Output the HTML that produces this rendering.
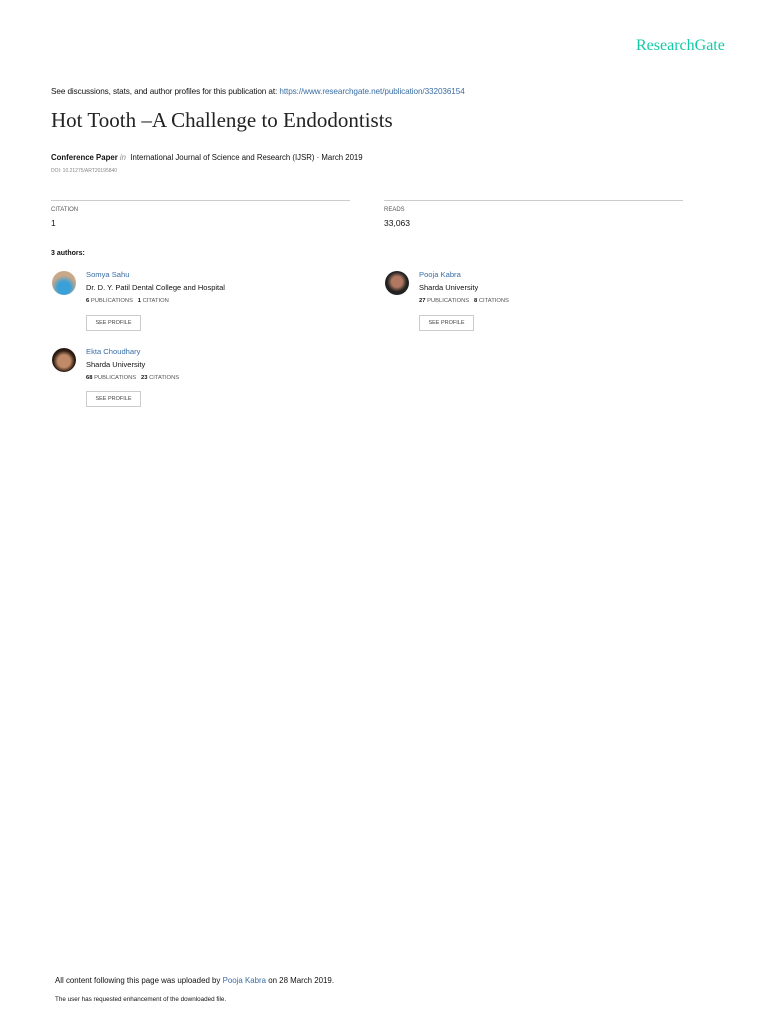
<!DOCTYPE html>
<html><head><meta charset="utf-8"><style>
body{margin:0;width:768px;height:1024px;background:#fff;position:relative;font-family:"Liberation Sans",sans-serif;color:#111;overflow:hidden}
.a{position:absolute;white-space:nowrap}
.blue{color:#3a6ea5}
.lbl{font-size:6px;color:#555}
.btn{position:absolute;width:55px;height:16px;border:1px solid #ccc;box-sizing:border-box;font-size:5.5px;color:#444;text-align:center;line-height:15px}
.av{position:absolute;width:24px;height:24px;border-radius:50%}
</style></head><body>
<div class="a" style="left:636px;top:37px;font-family:'Liberation Serif',serif;font-size:16px;color:#14c9a6">ResearchGate</div>
<div class="a" style="left:51px;top:87px;font-size:8.2px;letter-spacing:-0.1px">See discussions, stats, and author profiles for this publication at: <span class="blue">https://www.researchgate.net/publication/332036154</span></div>
<div class="a" style="left:51px;top:108px;font-family:'Liberation Serif',serif;font-size:21px;color:#222">Hot Tooth –A Challenge to Endodontists</div>
<div class="a" style="left:51px;top:153px;font-size:7.8px"><b>Conference Paper</b> <i style="color:#888">in</i> &nbsp;International Journal of Science and Research (IJSR) · March 2019</div>
<div class="a" style="left:51px;top:168px;font-size:5px;color:#888">DOI: 10.21275/ART20195840</div>
<div class="a" style="left:51px;top:200px;width:299px;border-top:1px solid #ccc"></div>
<div class="a" style="left:384px;top:200px;width:299px;border-top:1px solid #ccc"></div>
<div class="a lbl" style="left:51px;top:207px">CITATION</div>
<div class="a" style="left:51px;top:218px;font-size:8.5px">1</div>
<div class="a lbl" style="left:384px;top:207px">READS</div>
<div class="a" style="left:384px;top:218px;font-size:8.5px">33,063</div>
<div class="a" style="left:51px;top:250px;font-size:7px;font-weight:bold">3 authors:</div>

<div class="av" style="left:52px;top:271px;background:radial-gradient(circle at 50% 70%,#3aa0d8 30%,#c9a888 60%)"></div>
<div class="a blue" style="left:86px;top:270px;font-size:7.6px">Somya Sahu</div>
<div class="a" style="left:86px;top:283px;font-size:7.5px">Dr. D. Y. Patil Dental College and Hospital</div>
<div class="a lbl" style="left:86px;top:298px;font-size:5.8px"><b style="color:#111">6</b> PUBLICATIONS &nbsp; <b style="color:#111">1</b> CITATION</div>
<div class="btn" style="left:86px;top:315px">SEE PROFILE</div>

<div class="av" style="left:385px;top:271px;background:radial-gradient(circle at 50% 45%,#b07860 30%,#222 55%)"></div>
<div class="a blue" style="left:419px;top:270px;font-size:7.6px">Pooja Kabra</div>
<div class="a" style="left:419px;top:283px;font-size:7.5px">Sharda University</div>
<div class="a lbl" style="left:419px;top:298px;font-size:5.8px"><b style="color:#111">27</b> PUBLICATIONS &nbsp; <b style="color:#111">8</b> CITATIONS</div>
<div class="btn" style="left:419px;top:315px">SEE PROFILE</div>

<div class="av" style="left:52px;top:348px;background:radial-gradient(circle at 50% 55%,#c08a68 35%,#2a1a10 60%)"></div>
<div class="a blue" style="left:86px;top:347px;font-size:7.6px">Ekta Choudhary</div>
<div class="a" style="left:86px;top:360px;font-size:7.5px">Sharda University</div>
<div class="a lbl" style="left:86px;top:375px;font-size:5.8px"><b style="color:#111">68</b> PUBLICATIONS &nbsp; <b style="color:#111">23</b> CITATIONS</div>
<div class="btn" style="left:86px;top:391px">SEE PROFILE</div>

<div class="a" style="left:55px;top:976px;font-size:7.9px">All content following this page was uploaded by <span class="blue">Pooja Kabra</span> on 28 March 2019.</div>
<div class="a" style="left:55px;top:996px;font-size:6.3px">The user has requested enhancement of the downloaded file.</div>
</body></html>
